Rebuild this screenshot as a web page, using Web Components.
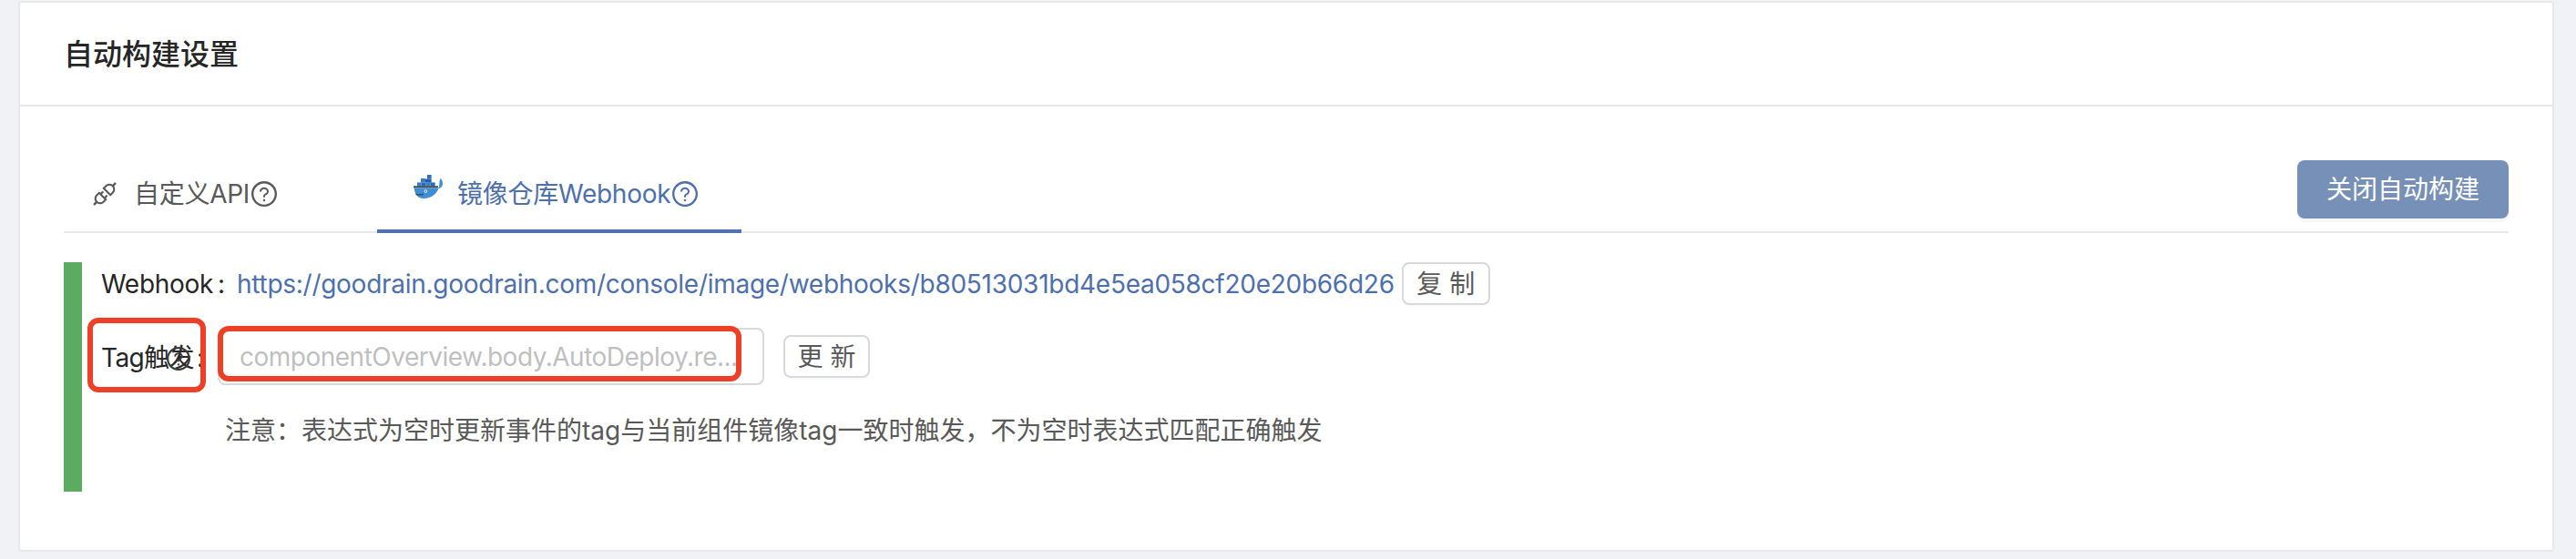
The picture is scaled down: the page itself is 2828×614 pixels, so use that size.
<!DOCTYPE html>
<html lang="zh">
<head>
<meta charset="utf-8">
<title>自动构建设置</title>
<style>
html,body{margin:0;padding:0;background:#f0f2f5;}
body{font-family:Inter,"Noto Sans CJK SC",sans-serif;font-size:28px;color:#262626;}
</style>
</head>
<body>
<build-card heading="自动构建设置">
  <tab-strip>
    <strip-tab slot="tabs" label="自定义API" kind="api"></strip-tab>
    <strip-tab slot="tabs" label="镜像仓库Webhook" kind="docker" active></strip-tab>
    <soft-button slot="extra" primary>关闭自动构建</soft-button>
  </tab-strip>
  <webhook-panel>
    <link-row></link-row>
    <tag-row></tag-row>
    <hint-line>注意：表达式为空时更新事件的tag与当前组件镜像tag一致时触发，不为空时表达式匹配正确触发</hint-line>
  </webhook-panel>
</build-card>

<script>
const FONT = 'Inter,"Noto Sans CJK SC",sans-serif';
const HELP = `<path d="M512 64C264.6 64 64 264.6 64 512s200.6 448 448 448 448-200.6 448-448S759.4 64 512 64zm0 820c-205.4 0-372-166.6-372-372s166.6-372 372-372 372 166.6 372 372-166.6 372-372 372z"/><path d="M623.6 316.7C593.6 290.4 554 276 512 276s-81.6 14.5-111.6 40.7C369.2 344 352 380.7 352 420v7.6c0 4.4 3.6 8 8 8h48c4.4 0 8-3.6 8-8V420c0-44.1 43.1-80 96-80s96 35.9 96 80c0 31.1-22 59.6-56.1 72.7-21.2 8.1-39.2 22.3-52.1 40.9-13.1 19-19.9 41.8-19.9 65.5V620c0 4.4 3.6 8 8 8h48c4.4 0 8-3.6 8-8v-22.7a48.3 48.3 0 0 1 30.9-44.8c59-22.7 97.1-74.7 97.1-132.5.1-39.3-17.1-76-48.3-103.3zM472 732a40 40 0 1 0 80 0 40 40 0 1 0-80 0z"/>`;
const API = `<path d="M917.7 148.8l-42.4-42.4c-1.6-1.6-3.6-2.3-5.7-2.3s-4.1.8-5.7 2.3l-76.1 76.1a199.27 199.27 0 0 0-112.1-34.3c-51.2 0-102.4 19.5-141.5 58.6L432.3 308.7a8.03 8.03 0 0 0 0 11.3L704 591.7c1.6 1.6 3.6 2.3 5.7 2.3 2 0 4.1-.8 5.7-2.3l101.9-101.9c68.9-69 77-175.7 24.3-253.5l76.1-76.1c3-3.2 3-8.3 0-11.4zM769.1 441.7l-59.4 59.4-186.8-186.8 59.4-59.4c24.9-24.9 58.1-38.7 93.4-38.7 35.3 0 68.4 13.7 93.4 38.7 24.9 24.9 38.7 58.1 38.7 93.4 0 35.3-13.8 68.4-38.7 93.4zm-190.2 105a8.03 8.03 0 0 0-11.3 0L501 613.3 410.7 523l66.7-66.7c3.1-3.1 3.1-8.2 0-11.3L441 408.6a8.03 8.03 0 0 0-11.3 0L363 475.3l-43-43a7.85 7.85 0 0 0-5.7-2.3c-2 0-4.1.8-5.7 2.3L206.8 534.2c-68.9 69-77 175.7-24.3 253.5l-76.1 76.1a8.03 8.03 0 0 0 0 11.3l42.4 42.4c1.6 1.6 3.6 2.3 5.7 2.3s4.1-.8 5.7-2.3l76.1-76.1c33.7 22.9 72.9 34.3 112.1 34.3 51.2 0 102.4-19.5 141.5-58.6l101.9-101.9c3.1-3.1 3.1-8.2 0-11.3l-43-43 66.7-66.7c3.1-3.1 3.1-8.2 0-11.3l-36.6-36.2zM441.7 769.1a131.32 131.32 0 0 1-93.4 38.7c-35.3 0-68.4-13.7-93.4-38.7a131.32 131.32 0 0 1-38.7-93.4c0-35.3 13.7-68.4 38.7-93.4l59.4-59.4 186.8 186.8-59.4 59.4z"/>`;

function shadow(el, html) {
  el.attachShadow({mode: 'open'}).innerHTML = html;
}

class BuildCard extends HTMLElement {
  connectedCallback() {
    shadow(this, `<style>
      :host{display:block;margin:1px 24px 0 20px;border:2px solid #e8e8e8;border-radius:4px;background:#fff;height:601px;box-sizing:content-box;}
      header{height:112px;display:flex;align-items:center;padding-left:48px;border-bottom:2px solid #e8e8e8;font:500 32px/44px ${FONT};color:#262626;}
      header span{position:relative;top:1px;}
      .body{padding:59px 48px 0;}
    </style>
    <header><span>${this.getAttribute('heading')}</span></header>
    <div class="body"><slot></slot></div>`);
  }
}

class TabStrip extends HTMLElement {
  connectedCallback() {
    shadow(this, `<style>
      :host{display:flex;justify-content:space-between;align-items:flex-start;height:80px;box-shadow:inset 0 -2px 0 #e8e8e8;}
      .tabs{display:flex;height:80px;}
    </style>
    <div class="tabs"><slot name="tabs"></slot></div>
    <slot name="extra"></slot>`);
  }
}

class StripTab extends HTMLElement {
  connectedCallback() {
    const kind = this.getAttribute('kind');
    const icon = kind === 'api'
      ? `<svg class="api" viewBox="64 64 896 896" width="28" height="28" fill="#595959">${API}</svg>`
      : `<svg class="docker" viewBox="0 0 48 36" width="48" height="36">
          <g fill="#2f6fb5">
            <rect x="24" y="6" width="4.6" height="4.6"/>
            <rect x="17" y="10" width="5" height="4.4" fill="#3b7cc4"/><rect x="22" y="10.6" width="6.6" height="4" fill="#1f5fa8"/>
            <rect x="13" y="14.4" width="4.6" height="4.2" fill="#3b7cc4"/><rect x="17.6" y="14.4" width="5" height="4.2" fill="#2a69b0"/><rect x="22.6" y="14.4" width="5" height="4.2" fill="#3b7cc4"/><rect x="27.6" y="14.4" width="5" height="4.2" fill="#2a69b0"/>
          </g>
          <path fill="#3f8fd8" d="M9.500 20.500h27c.8-1.600 1-4.400.9-6.300.2-2 .9-3.500 1.300-4.200 1.100 1.200 2.300 3.200 2.300 5.600 0 2.100-.8 3.600-2.200 4.700-.8.300-1.500.6-2.300.7C34.500 26.500 29 32 20 32c-6 0-9.700-4.500-10.500-11.500z"/>
          <rect x="9" y="18.300" width="27" height="2" fill="#3d4a57"/>
          <circle cx="22.300" cy="24" r="1.700" fill="#fff"/><circle cx="22.300" cy="24" r=".8" fill="#2b3a49"/>
          <path d="M11.500 27.300c3 .8 5.500.7 8.300 0" stroke="#3d4a57" stroke-width="1.500" fill="none"/>
        </svg>`;
    shadow(this, `<style>
      :host{display:block;height:80px;box-sizing:border-box;margin-right:62px;color:#595959;}
      :host([active]){color:#4d6fae;border-bottom:4px solid #5272ad;margin-right:0;}
      .in{display:flex;align-items:center;height:76px;font:28px/40px ${FONT};letter-spacing:-.27px;padding:0 48px 0 31px;position:relative;top:-1px;white-space:nowrap;}
      .api{margin:0 18px 0 0;}
      .docker{margin:-19px 9px 0 0;}
      .q{margin-left:2px;}
    </style>
    <div class="in">${icon}<span>${this.getAttribute('label')}</span>
    <svg class="q" viewBox="64 64 896 896" width="28" height="28" fill="currentColor">${HELP}</svg></div>`);
  }
}

class SoftButton extends HTMLElement {
  connectedCallback() {
    shadow(this, `<style>
      :host{display:inline-flex;align-items:center;justify-content:center;box-sizing:border-box;height:47px;width:97px;border:2px solid #d9d9d9;border-radius:8px;background:#fff;color:#595959;font:28px/1 ${FONT};box-shadow:0 2px 0 rgba(0,0,0,.015);white-space:pre;}
      :host([primary]){height:64px;width:232px;border:0;background:#7790b8;color:#fff;box-shadow:0 4px 0 rgba(0,0,0,.03);}
    </style><slot></slot>`);
  }
}

class WebhookPanel extends HTMLElement {
  connectedCallback() {
    shadow(this, `<style>
      :host{display:block;box-sizing:border-box;height:252px;margin-top:32px;border-left:20px solid #5bab60;padding-left:21px;}
    </style><slot></slot>`);
  }
}

class LinkRow extends HTMLElement {
  connectedCallback() {
    shadow(this, `<style>
      :host{display:flex;align-items:center;height:47px;font:28px/40px ${FONT};color:#262626;}
      .k{width:149px;white-space:pre;letter-spacing:-.3px;}
      .k b{font-weight:400;margin-left:5px;}
      a{color:#4d6fae;text-decoration:none;margin-right:8px;white-space:nowrap;letter-spacing:-.27px;}
    </style>
    <span class="k">Webhook<b>:</b></span>
    <a href="#">https://goodrain.goodrain.com/console/image/webhooks/b80513031bd4e5ea058cf20e20b66d26</a>
    <soft-button>复 制</soft-button>`);
  }
}

class TagRow extends HTMLElement {
  connectedCallback() {
    shadow(this, `<style>
      :host{display:flex;align-items:center;height:63px;margin-top:25px;position:relative;font:28px/40px ${FONT};color:#262626;}
      .k{width:128px;white-space:pre;letter-spacing:-.6px;position:relative;top:1px;}
      .k b{font-weight:400;margin-left:3px;}
      .inp{box-sizing:border-box;width:600px;height:63px;border:2px solid #d9d9d9;border-radius:8px;padding-left:22px;color:#bfbfbf;display:flex;align-items:center;margin-right:21px;white-space:nowrap;overflow:hidden;letter-spacing:-.5px;}
      .mark{position:absolute;box-sizing:border-box;border:6px solid #ee4026;border-radius:12px;}
      .m1{left:-15px;top:-11px;width:130px;height:82px;}
      .m2{left:128px;top:-2px;width:575px;height:61px;}
      .q{position:absolute;left:72px;top:21px;}
    </style>
    <span class="k">Tag触发<b>:</b></span>
    <div class="inp">componentOverview.body.AutoDeploy.re...</div>
    <soft-button style="width:95px">更 新</soft-button>
    <svg class="q" viewBox="64 64 896 896" width="26" height="26" fill="#3a3a3a">${HELP}</svg>
    <i class="mark m1"></i><i class="mark m2"></i>`);
  }
}

class HintLine extends HTMLElement {
  connectedCallback() {
    shadow(this, `<style>
      :host{display:block;margin-top:28px;padding-left:136px;font:28px/44px ${FONT};color:#595959;white-space:nowrap;}
    </style><slot></slot>`);
  }
}

customElements.define('build-card', BuildCard);
customElements.define('tab-strip', TabStrip);
customElements.define('strip-tab', StripTab);
customElements.define('soft-button', SoftButton);
customElements.define('webhook-panel', WebhookPanel);
customElements.define('link-row', LinkRow);
customElements.define('tag-row', TagRow);
customElements.define('hint-line', HintLine);
</script>
</body>
</html>
